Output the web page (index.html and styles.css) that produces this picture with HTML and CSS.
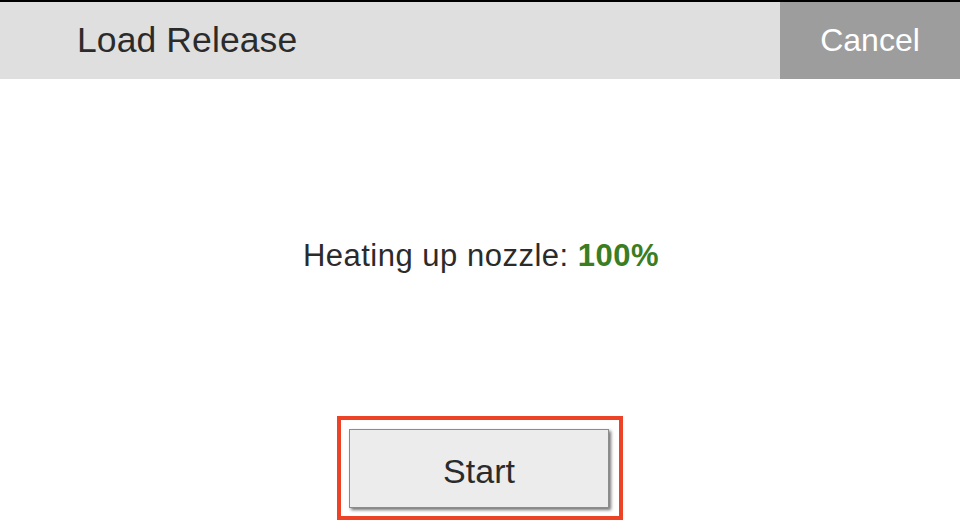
FILE: index.html
```html
<!DOCTYPE html>
<html>
<head>
  <meta charset="UTF-8">
  <title>Load Release</title>
  <link rel="stylesheet" href="styles.css">
</head>
<body>
  <div class="screen">
    <div class="top-bar">
      <div class="top-title">Load Release</div>
      <button class="cancel-button">Cancel</button>
    </div>

    <div class="content">
      <div class="status-line">Heating up nozzle: <span class="status-value">100%</span></div>

      <div class="start-frame">
        <button class="start-button">Start</button>
      </div>
    </div>
  </div>
</body>
</html>
```

FILE: styles.css
```css
* {
  box-sizing: border-box;
}

body {
  margin: 0;
  padding: 0;
  background: #ffffff;
  font-family: 'Liberation Sans', Arial, sans-serif;
  color: #2b2b2b;
  overflow: hidden;
}

.screen {
  width: 960px;
  height: 530px;
  display: flex;
  flex-direction: column;
}

.top-bar {
  height: 79px;
  border-top: 2px solid #000000;
  background: #dfdfdf;
  display: flex;
}

.top-title {
  flex: 1;
  padding-left: 77px;
  font-size: 35.5px;
  line-height: 77px;
  letter-spacing: 0.1px;
  color: #2b2b2b;
}

.cancel-button {
  width: 180px;
  border: none;
  margin: 0;
  padding: 0;
  background: #9d9d9d;
  color: #ffffff;
  font-family: inherit;
  font-size: 32px;
  line-height: 77px;
}

.content {
  flex: 1;
  display: flex;
  flex-direction: column;
  align-items: center;
  padding-top: 159px;
}

.status-line {
  font-size: 31px;
  line-height: 36px;
  letter-spacing: 0.5px;
  padding-left: 2px;
}

.status-value {
  font-weight: bold;
  color: #3b7d23;
}

/* Highlighted start button */
.start-frame {
  margin-top: 142px;
  border: 4px solid #ee4226;
  padding: 9px 10px 8px 8px;
}

.start-button {
  display: block;
  width: 260px;
  height: 79px;
  margin: 0;
  padding: 6px 0 0;
  border: 1px solid #8c8c8c;
  background: #ececec;
  box-shadow: 2px 2px 3px rgba(0, 0, 0, 0.55);
  font-family: inherit;
  font-size: 34px;
  color: #2b2b2b;
}
```
